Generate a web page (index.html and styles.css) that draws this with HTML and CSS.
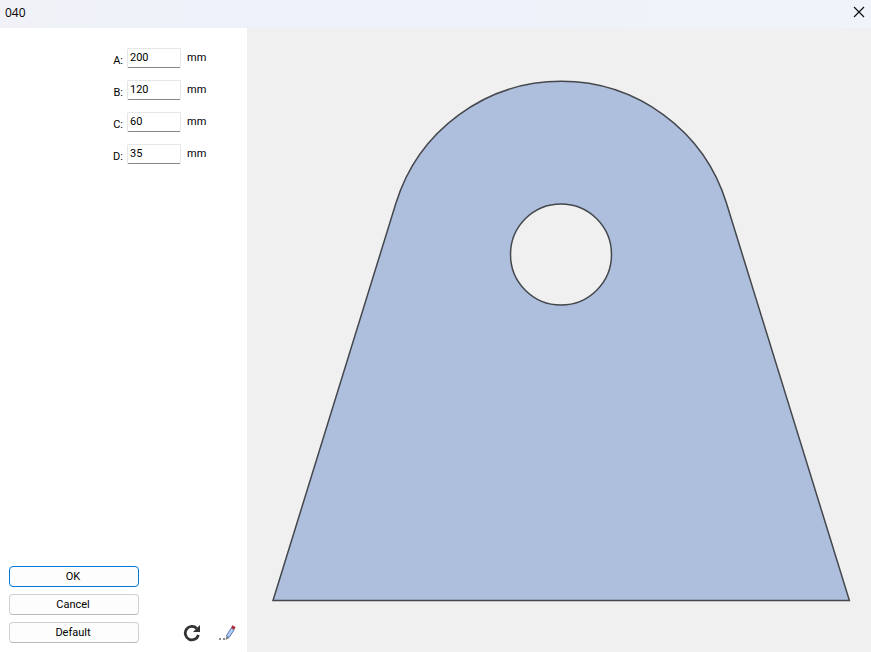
FILE: index.html
```
<!DOCTYPE html>
<html lang="en">
  <head>
    <meta charset="UTF-8" />
    <meta name="viewport" content="width=device-width, initial-scale=1.0" />
    <title>040</title>
    <link rel="stylesheet" href="styles.css">
  </head>

  <body>
    <header class="titlebar">
      <h1>040</h1>
      <button class="close" type="button" aria-label="Close">
        <svg width="12" height="12" viewBox="0 0 12 12">
          <path d="M1 1L11 11M11 1L1 11" stroke="#111" stroke-width="1.2" />
        </svg>
      </button>
    </header>

    <main class="content">
      <form class="panel">
        <div class="fields">
          <div class="field">
            <label for="dimA">A:</label>
            <input id="dimA" type="text" value="200" />
            <span>mm</span>
          </div>
          <div class="field">
            <label for="dimB">B:</label>
            <input id="dimB" type="text" value="120" />
            <span>mm</span>
          </div>
          <div class="field">
            <label for="dimC">C:</label>
            <input id="dimC" type="text" value="60" />
            <span>mm</span>
          </div>
          <div class="field">
            <label for="dimD">D:</label>
            <input id="dimD" type="text" value="35" />
            <span>mm</span>
          </div>
        </div>

        <div class="actions">
          <div class="buttons">
            <button class="btn primary" type="submit">OK</button>
            <button class="btn" type="button">Cancel</button>
            <button class="btn" type="reset">Default</button>
          </div>
          <div class="tools">
            <button class="tool" type="button" aria-label="Refresh">
              <svg width="18" height="18" viewBox="0 0 18 18">
                <path d="M13.800 4.500A6.700 6.700 0 1 0 15.400 11" fill="none" stroke="#333" stroke-width="2.800" />
                <path d="M17 1V8H10Z" fill="#333" />
              </svg>
            </button>
            <button class="tool" type="button" aria-label="Edit">
              <svg width="18" height="18" viewBox="0 0 18 18">
                <path d="M1 14h2v2H1zM5 14h2v2H5z" fill="#8c8c8c" />
                <path d="M7.500 16L8.300 11.800L11.500 14Z" fill="#858585" />
                <path d="M8.500 11.500L13.300 4L16 6L11 13.500Z" fill="#b4cff5" stroke="#5578b8" stroke-width="1" />
                <path d="M13 3.600L14.500 1.200L17.600 3.300L16.200 5.800Z" fill="#b02a35" />
              </svg>
            </button>
          </div>
        </div>
      </form>

      <section class="preview">
        <svg viewBox="0 0 624 624" role="img" aria-label="Plate outline">
          <path
            class="plate"
            fill-rule="evenodd"
            d="M26 572.500L148.900 175.300A173 173 0 0 1 479.500 175.300L602.400 572.500Z
               M263.500 226.500a50.500 50.500 0 1 0 101 0a50.500 50.500 0 1 0 -101 0Z"
          />
        </svg>
      </section>
    </main>
  </body>
</html>
```

FILE: styles.css
```
* {
  box-sizing: border-box;
}

body {
  margin: 0;
  height: 100vh;
  display: flex;
  flex-direction: column;
  font-family: Roboto, "Liberation Sans", sans-serif;
  font-size: 11px;
  color: #000;
  background-color: #fff;
}

button,
input {
  font: inherit;
  color: inherit;
}

.titlebar {
  height: 28px;
  padding: 0 5px;
  display: flex;
  justify-content: space-between;
  align-items: center;
  background: linear-gradient(to right, #f0f2f7, #eef2fb 35%, #eef4f9);
}

.titlebar h1 {
  margin: 0;
  font-family: "Open Sans", sans-serif;
  font-size: 12px;
  line-height: 24px;
  font-weight: normal;
  padding-bottom: 2px;
}

.close,
.tool {
  padding: 0;
  border: none;
  background: none;
  display: flex;
}

.close {
  padding: 0 1px 4px;
}

.content {
  flex: 1;
  min-height: 0;
  display: flex;
}

.panel {
  flex: none;
  width: 247px;
  display: flex;
  flex-direction: column;
  justify-content: space-between;
  padding: 20px 11px 9px 9px;
}

.fields {
  display: flex;
  flex-direction: column;
  gap: 12px;
}

.field {
  display: grid;
  grid-template-columns: 114px 54px 1fr;
  column-gap: 4px;
  line-height: 20px;
}

.field label {
  text-align: right;
  padding-top: 3px;
  height: 20px;
}

.field input {
  width: 100%;
  height: 20px;
  padding: 0 2px;
  border: 1px solid #e6e6e6;
  border-bottom-color: #868686;
  border-radius: 2px;
  background-color: #fff;
}

.field span {
  padding-left: 2px;
}

.actions {
  display: flex;
  justify-content: space-between;
  align-items: flex-end;
}

.buttons {
  width: 130px;
  display: flex;
  flex-direction: column;
  gap: 7px;
}

.btn {
  height: 21px;
  padding: 0 2px 0 0;
  border: 1px solid #d0d0d0;
  border-bottom-color: #bababa;
  border-radius: 4px;
  background-color: #fdfdfd;
}

.btn.primary {
  border-color: #0078d4;
}

.tools {
  display: flex;
  gap: 17px;
  padding-bottom: 1px;
}

.preview {
  flex: 1;
  min-width: 0;
  background-color: #f0f0f0;
}

.preview svg {
  display: block;
  width: 100%;
  height: 100%;
}

.plate {
  fill: #aebfde;
  stroke: #44474c;
  stroke-width: 1.5px;
}
```
